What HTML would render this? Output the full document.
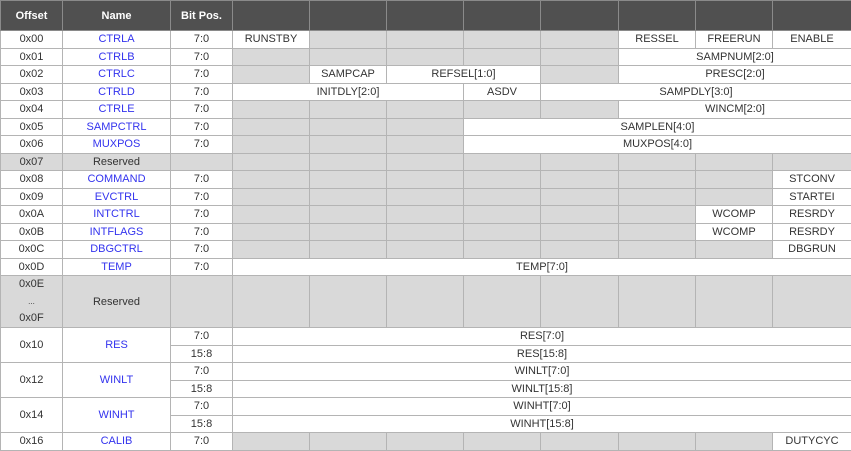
<!DOCTYPE html>
<html><head><meta charset="utf-8"><style>
html,body{margin:0;padding:0;background:#fff;width:851px;height:451px;overflow:hidden}
table{border-collapse:collapse;table-layout:fixed;position:absolute;left:0;top:0;width:851px;font-family:"Liberation Sans",sans-serif;font-size:11px;color:#333}
td,th{border:1px solid #b4b4b4;text-align:center;padding:0;height:16.5px;line-height:14px;overflow:hidden;white-space:nowrap}
th{background:#505050;color:#fff;font-weight:bold;height:29px;border-color:#8a8a8a}
.g{background:#d9d9d9}
.n{color:#3333ee}
</style></head><body>
<table>
<colgroup><col style="width:62px"><col style="width:108px"><col style="width:62px"><col style="width:77px"><col style="width:77px"><col style="width:77px"><col style="width:77px"><col style="width:78px"><col style="width:77px"><col style="width:77px"><col style="width:79px"></colgroup>
<tr><th>Offset</th><th>Name</th><th>Bit Pos.</th><th></th><th></th><th></th><th></th><th></th><th></th><th></th><th></th></tr>
<tr><td>0x00</td><td class="n">CTRLA</td><td>7:0</td><td>RUNSTBY</td><td class="g"></td><td class="g"></td><td class="g"></td><td class="g"></td><td>RESSEL</td><td>FREERUN</td><td>ENABLE</td></tr>
<tr><td>0x01</td><td class="n">CTRLB</td><td>7:0</td><td class="g"></td><td class="g"></td><td class="g"></td><td class="g"></td><td class="g"></td><td colspan="3">SAMPNUM[2:0]</td></tr>
<tr><td>0x02</td><td class="n">CTRLC</td><td>7:0</td><td class="g"></td><td>SAMPCAP</td><td colspan="2">REFSEL[1:0]</td><td class="g"></td><td colspan="3">PRESC[2:0]</td></tr>
<tr><td>0x03</td><td class="n">CTRLD</td><td>7:0</td><td colspan="3">INITDLY[2:0]</td><td>ASDV</td><td colspan="4">SAMPDLY[3:0]</td></tr>
<tr><td>0x04</td><td class="n">CTRLE</td><td>7:0</td><td class="g"></td><td class="g"></td><td class="g"></td><td class="g"></td><td class="g"></td><td colspan="3">WINCM[2:0]</td></tr>
<tr><td>0x05</td><td class="n">SAMPCTRL</td><td>7:0</td><td class="g"></td><td class="g"></td><td class="g"></td><td colspan="5">SAMPLEN[4:0]</td></tr>
<tr><td>0x06</td><td class="n">MUXPOS</td><td>7:0</td><td class="g"></td><td class="g"></td><td class="g"></td><td colspan="5">MUXPOS[4:0]</td></tr>
<tr><td class="g">0x07</td><td class="g">Reserved</td><td class="g"></td><td class="g"></td><td class="g"></td><td class="g"></td><td class="g"></td><td class="g"></td><td class="g"></td><td class="g"></td><td class="g"></td></tr>
<tr><td>0x08</td><td class="n">COMMAND</td><td>7:0</td><td class="g"></td><td class="g"></td><td class="g"></td><td class="g"></td><td class="g"></td><td class="g"></td><td class="g"></td><td>STCONV</td></tr>
<tr><td>0x09</td><td class="n">EVCTRL</td><td>7:0</td><td class="g"></td><td class="g"></td><td class="g"></td><td class="g"></td><td class="g"></td><td class="g"></td><td class="g"></td><td>STARTEI</td></tr>
<tr><td>0x0A</td><td class="n">INTCTRL</td><td>7:0</td><td class="g"></td><td class="g"></td><td class="g"></td><td class="g"></td><td class="g"></td><td class="g"></td><td>WCOMP</td><td>RESRDY</td></tr>
<tr><td>0x0B</td><td class="n">INTFLAGS</td><td>7:0</td><td class="g"></td><td class="g"></td><td class="g"></td><td class="g"></td><td class="g"></td><td class="g"></td><td>WCOMP</td><td>RESRDY</td></tr>
<tr><td>0x0C</td><td class="n">DBGCTRL</td><td>7:0</td><td class="g"></td><td class="g"></td><td class="g"></td><td class="g"></td><td class="g"></td><td class="g"></td><td class="g"></td><td>DBGRUN</td></tr>
<tr><td>0x0D</td><td class="n">TEMP</td><td>7:0</td><td colspan="8">TEMP[7:0]</td></tr>
<tr style="height:52px"><td class="g" style="line-height:17px">0x0E<br><span style="font-size:8px">...</span><br>0x0F</td><td class="g">Reserved</td><td class="g"></td><td class="g"></td><td class="g"></td><td class="g"></td><td class="g"></td><td class="g"></td><td class="g"></td><td class="g"></td><td class="g"></td></tr>
<tr><td rowspan="2">0x10</td><td rowspan="2" class="n">RES</td><td>7:0</td><td colspan="8">RES[7:0]</td></tr>
<tr><td>15:8</td><td colspan="8">RES[15:8]</td></tr>
<tr><td rowspan="2">0x12</td><td rowspan="2" class="n">WINLT</td><td>7:0</td><td colspan="8">WINLT[7:0]</td></tr>
<tr><td>15:8</td><td colspan="8">WINLT[15:8]</td></tr>
<tr><td rowspan="2">0x14</td><td rowspan="2" class="n">WINHT</td><td>7:0</td><td colspan="8">WINHT[7:0]</td></tr>
<tr><td>15:8</td><td colspan="8">WINHT[15:8]</td></tr>
<tr><td>0x16</td><td class="n">CALIB</td><td>7:0</td><td class="g"></td><td class="g"></td><td class="g"></td><td class="g"></td><td class="g"></td><td class="g"></td><td class="g"></td><td>DUTYCYC</td></tr>
</table>
</body></html>
